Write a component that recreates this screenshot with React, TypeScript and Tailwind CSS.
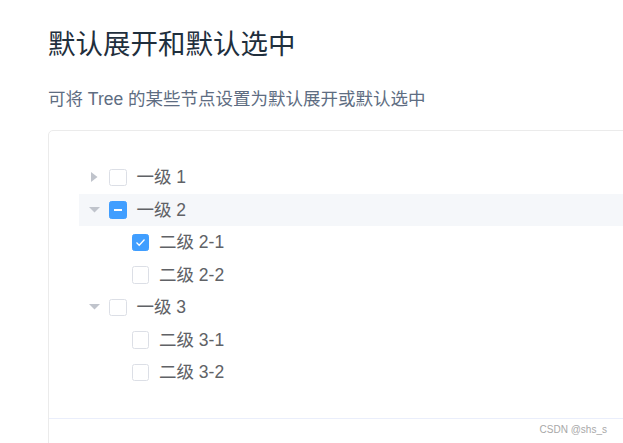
import React from "react";

type Node = {
  label: string;
  level: number;
  caret?: "right" | "down";
  state?: "none" | "checked" | "half";
  active?: boolean;
};

const nodes: Node[] = [
  { label: "一级 1", level: 1, caret: "right" },
  { label: "一级 2", level: 1, caret: "down", state: "half", active: true },
  { label: "二级 2-1", level: 2, state: "checked" },
  { label: "二级 2-2", level: 2 },
  { label: "一级 3", level: 1, caret: "down" },
  { label: "二级 3-1", level: 2 },
  { label: "二级 3-2", level: 2 },
];

function Caret({ dir }: { dir?: "right" | "down" }) {
  return (
    <span className="w-[30px] h-full flex items-center justify-center shrink-0">
      {dir === "right" && (
        <svg width="7" height="10" viewBox="0 0 7 10">
          <polygon points="0,0 6.5,5 0,10" fill="#c0c4cc" />
        </svg>
      )}
      {dir === "down" && (
        <svg width="11" height="6" viewBox="0 0 11 6">
          <polygon points="0,0 11,0 5.5,5.5" fill="#c0c4cc" />
        </svg>
      )}
    </span>
  );
}

function Checkbox({ state = "none" }: { state?: Node["state"] }) {
  const on = state !== "none";
  return (
    <span
      className={`w-[17.5px] h-[17.5px] rounded-[2.5px] border flex items-center justify-center shrink-0 mr-[10px] ${
        on ? "bg-[#409eff] border-[#409eff]" : "bg-white border-[#dcdfe6]"
      }`}
    >
      {state === "half" && <span className="block w-[7.5px] h-[2px] bg-white" />}
      {state === "checked" && (
        <svg width="11" height="9" viewBox="0 0 11 9">
          <polyline points="1.5,4.5 4.2,7.2 9.5,1.5" fill="none" stroke="white" strokeWidth="1.3" />
        </svg>
      )}
    </span>
  );
}

export default function App() {
  return (
    <div
      className="relative w-[623px] h-[443px] overflow-hidden bg-white pl-[48px]"
      style={{ fontFamily: '"Liberation Sans", "Noto Sans CJK SC", sans-serif' }}
    >
      {/* Heading */}
      <h3 className="pt-[27px] text-[27.5px] leading-[36px] font-normal text-[#1f2f3d] whitespace-nowrap">
        默认展开和默认选中
      </h3>
      <p className="mt-[24px] text-[17.5px] leading-[24px] text-[#5e6d82] whitespace-nowrap">
        可将 Tree 的某些节点设置为默认展开或默认选中
      </p>

      {/* Demo block */}
      <div className="mt-[19px] w-[640px] border border-[#ebebeb] rounded-[5px]">
        <div className="px-[30px] pt-[30px] pb-[29px]">
          {nodes.map((n) => (
            <div
              key={n.label}
              className={`h-[32.5px] flex items-center ${n.active ? "bg-[#f5f7fa]" : ""}`}
              style={{ paddingLeft: (n.level - 1) * 22.5 }}
            >
              <Caret dir={n.caret} />
              <Checkbox state={n.state} />
              <span className="text-[17.5px] text-[#606266] whitespace-nowrap">{n.label}</span>
            </div>
          ))}
        </div>
        <div className="h-[60px] border-t border-[#eaeefb]" />
      </div>

      {/* Watermark */}
      <span className="absolute right-[16px] top-[424px] text-[10px] leading-[12px] text-[#a8a8a8] whitespace-nowrap">
        CSDN @shs_s
      </span>
    </div>
  );
}
